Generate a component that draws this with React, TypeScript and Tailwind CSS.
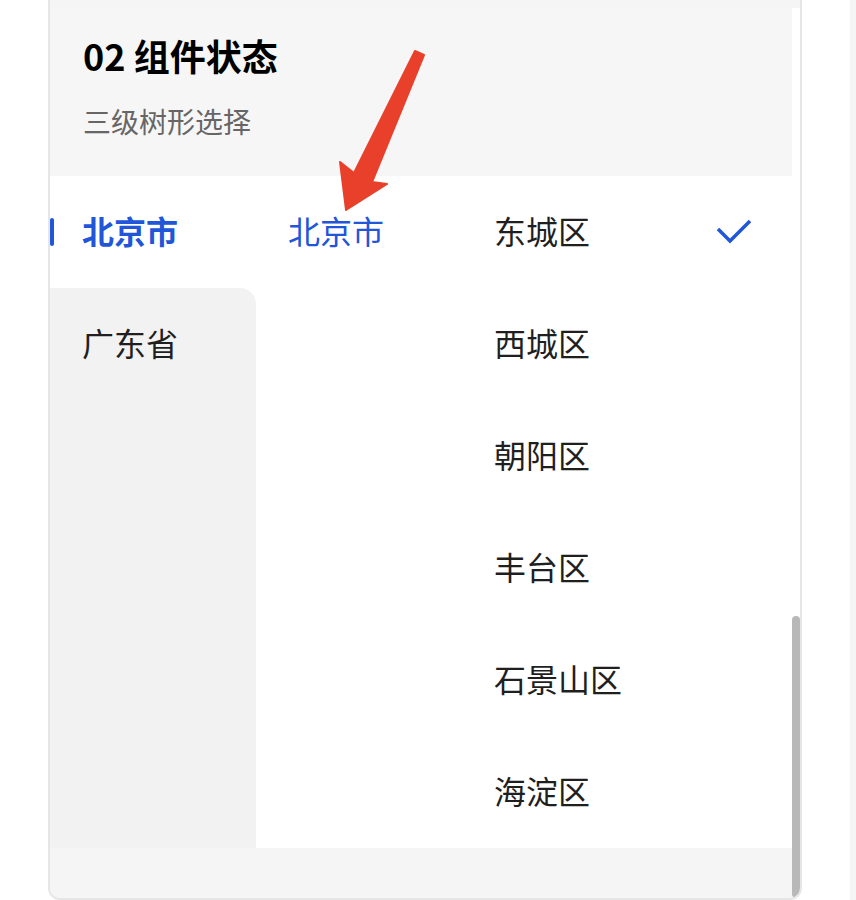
import React from 'react';

const font = { fontFamily: '"Noto Sans CJK SC", "Noto Sans", sans-serif' };

const districts = ['东城区', '西城区', '朝阳区', '丰台区', '石景山区', '海淀区'];

function Arrow() {
  // red annotation arrow pointing at the middle column
  return (
    <svg className="pointer-events-none absolute left-0 top-0" width="856" height="900" viewBox="0 0 856 900">
      <polygon
        points="415,51 424,55 372,182 387,184 346,210 340,162 354,173"
        fill="#e8402a"
        stroke="#e8402a"
        strokeWidth="2"
        strokeLinejoin="round"
      />
    </svg>
  );
}

export default function App() {
  return (
    <div className="relative flex h-[900px] w-[856px] overflow-hidden bg-white" style={font}>
      <div className="w-12 shrink-0" />
      <div className="flex h-[900px] w-[754px] shrink-0 flex-col overflow-hidden rounded-b-[12px] border-x-2 border-b-2 border-[#e6e6e6] bg-[#f5f5f5]">
        <div className="h-2 shrink-0" />
        <div className="flex flex-1">
          <div className="flex flex-1 flex-col">
            <div className="flex h-[168px] flex-col bg-[#f6f6f6] px-[33px] pt-[29px]">
              <div className="text-[36px] font-bold leading-[36px] text-black">02 组件状态</div>
              <div className="mt-[34px] text-[28px] leading-[28px] text-[#666]">三级树形选择</div>
            </div>
            <div className="flex h-[672px] bg-white">
              <div className="flex w-[206px] flex-col">
                <div className="flex h-[112px] items-center pb-1">
                  <div className="mt-1 h-7 w-1 rounded-full bg-[#2156d8]" />
                  <span className="ml-[28px] text-[32px] font-bold text-[#2156d8]">北京市</span>
                </div>
                <div className="flex-1 rounded-tr-[16px] bg-[#f2f2f2]">
                  <div className="flex h-[112px] items-center px-[32px] pb-1 text-[32px] text-[#1f1f1f]">广东省</div>
                </div>
              </div>
              <div className="w-[206px]">
                <div className="flex h-[112px] items-center px-[32px] pb-1 text-[32px] text-[#2156d8]">北京市</div>
              </div>
              <div className="flex-1">
                {districts.map((d, i) => (
                  <div key={d} className="flex h-[112px] items-center justify-between pb-1 pl-[32px] pr-[40px] text-[32px] text-[#1f1f1f]">
                    <span>{d}</span>
                    {i === 0 && (
                      <svg className="mt-1" width="36" height="26" viewBox="0 0 36 26">
                        <polyline points="2,10 14,22 34,2" fill="none" stroke="#2156d8" strokeWidth="3.5" />
                      </svg>
                    )}
                  </div>
                ))}
              </div>
            </div>
            <div className="h-[50px] bg-[#f5f5f5]" />
          </div>
          <div className="relative w-2 bg-white">
            <div className="absolute left-0 top-[608px] h-[282px] w-2 rounded-full bg-[#b8b8b8]" />
          </div>
        </div>
      </div>
      <div className="w-12 shrink-0" />
      <div className="flex-1 bg-[#f5f5f5]" />
      <Arrow />
    </div>
  );
}
